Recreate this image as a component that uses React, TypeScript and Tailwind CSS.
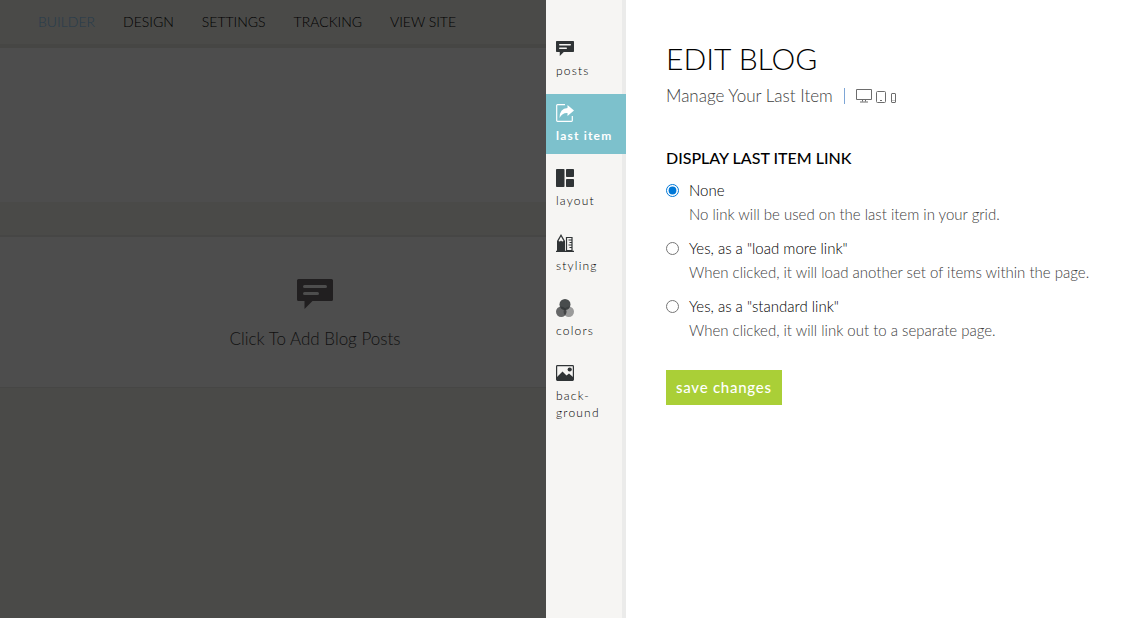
import type { ReactNode } from 'react';
import clsx from 'clsx';

const navLinks = ['Builder', 'Design', 'Settings', 'Tracking', 'View Site'];

const PostsIcon = ({ className, lines }: { className: string; lines: string }) => (
  <svg viewBox="0 0 36 30" className={className} aria-hidden="true">
    <path d="M1.500 0h33Q36 0 36 1.500v19Q36 22 34.500 22H15.500L7.500 30V22h-6Q0 22 0 20.500v-19Q0 0 1.500 0z" fill="currentColor" />
    <path d="M7.500 7.500h21M7.500 14.500h13" stroke={lines} strokeWidth="3" strokeLinecap="round" />
  </svg>
);

const ShareIcon = () => (
  <svg viewBox="0 0 18 18" className="size-[18px]" fill="none" aria-hidden="true">
    <path d="M9 .7H1.500Q.7.700.7 1.500V16.500Q.7 17.300 1.500 17.300H15.500Q16.300 17.300 16.300 16.500V12" stroke="currentColor" strokeWidth="1.200" />
    <path d="M11.500 1L18 6.500 11.500 12V9Q6.500 8.500 3.500 14 3.500 4.500 11.500 4z" fill="currentColor" />
  </svg>
);

const LayoutIcon = () => (
  <svg viewBox="0 0 18 18" className="size-[18px]" fill="currentColor" aria-hidden="true">
    <rect width="8.500" height="18" rx=".8" />
    <rect x="10" width="8" height="8" rx=".8" />
    <rect x="10" y="10" width="8" height="8" rx=".8" />
  </svg>
);

const StylingIcon = () => (
  <svg viewBox="0 0 18 18" className="size-[18px]" fill="none" aria-hidden="true">
    <path d="M1 17V7L5 0l4 7v10z" fill="currentColor" />
    <path d="M5 2.500L7.500 7Q6 8 5 6.500 4 8 2.500 7z" fill="#f6f5f3" />
    <path d="M10.500 3.500h5.500v13h-5.500z" stroke="currentColor" strokeWidth="1.200" />
    <path d="M12.500 6H16M13.500 8.500H16M12.500 11H16M13.500 13.500H16M0 17.300h18" stroke="currentColor" strokeWidth="1.200" />
  </svg>
);

const ColorsIcon = () => (
  <svg viewBox="0 0 18 18" className="size-[18px]" aria-hidden="true">
    <circle cx="12.800" cy="12.700" r="5.200" fill="#9b9b9b" />
    <circle cx="5.200" cy="12.700" r="5.200" fill="#666768" />
    <path d="M9 9.100a5.200 5.200 0 0 1 0 7.200 5.200 5.200 0 0 1 0-7.200z" fill="#444546" />
    <circle cx="9" cy="5.500" r="5.500" fill="#303436" fillOpacity=".88" />
  </svg>
);

const BackgroundIcon = () => (
  <svg viewBox="0 0 18 16" className="h-4 w-[18px]" aria-hidden="true">
    <rect x=".6" y=".6" width="16.800" height="14.800" rx=".8" fill="none" stroke="currentColor" strokeWidth="1.200" />
    <path d="M1 12l5.500-5.500 4 4 2.500-2 4 3.500v3.500H1z" fill="currentColor" />
    <circle cx="13.700" cy="4.500" r="2.100" fill="currentColor" />
  </svg>
);

const DevicesIcon = () => (
  <svg viewBox="0 0 42 16" className="h-4 w-[42px]" fill="none" stroke="#6d6d6d" aria-hidden="true">
    <path d="M.5 1.500h15v10H.5zM6.500 11.500v2M9.500 11.500v2M4 14h8" />
    <rect x="20.500" y="3.500" width="9" height="11" rx="1" />
    <path d="M24 12.500h2" />
    <rect x="35.500" y="5.500" width="4" height="9" rx=".5" />
    <path d="M36 12.500h3" strokeOpacity=".4" />
  </svg>
);

const tabs: { label: ReactNode; icon: ReactNode; active?: boolean }[] = [
  { label: 'posts', icon: <PostsIcon className="h-[15px] w-[18px]" lines="#f6f5f3" /> },
  { label: 'last item', icon: <ShareIcon />, active: true },
  { label: 'layout', icon: <LayoutIcon /> },
  { label: 'styling', icon: <StylingIcon /> },
  { label: 'colors', icon: <ColorsIcon /> },
  { label: <>back-<br />ground</>, icon: <BackgroundIcon /> },
];

const options = [
  { id: 'none', label: 'None', hint: 'No link will be used on the last item in your grid.' },
  { id: 'load-more', label: 'Yes, as a "load more link"', hint: 'When clicked, it will load another set of items within the page.' },
  { id: 'standard', label: 'Yes, as a "standard link"', hint: 'When clicked, it will link out to a separate page.' },
];

const App = () => {
  return (
    <div className="flex min-h-screen bg-white font-['Lato','Open_Sans',sans-serif] font-light">
      {/* Dimmed page behind the editor */}
      <div className="min-w-0 flex-1 overflow-hidden bg-[#4a4a48]">
        <nav className="flex h-12 items-center gap-7 border-b-4 border-[#464644] pl-[38px] text-sm whitespace-nowrap text-black uppercase">
          {navLinks.map((link, i) => (
            <a key={link} href="#" className={clsx(i === 0 && 'text-[#263b4c]')}>
              {link}
            </a>
          ))}
        </nav>
        <div className="h-[154px] bg-[#4d4d4d]" />
        <div className="h-[35px] border-b-2 border-[#464645]" />
        <button className="flex h-[151px] w-full flex-col items-center gap-5 border-b border-[#464645] bg-[#4d4d4d] pt-[42px] pl-[84px] text-[#211f20]">
          <PostsIcon className="h-[30px] w-9" lines="#4d4d4d" />
          <span className="text-[17px] leading-5 text-[#111]">Click To Add Blog Posts</span>
        </button>
      </div>

      {/* Tabs */}
      <aside className="w-20 shrink-0 border-r-4 border-[#ebebea] bg-[#f6f5f3] pt-[29px]">
        {tabs.map((tab, i) => (
          <button
            key={i}
            className={clsx(
              'mb-[5px] flex min-h-[60px] w-20 flex-col items-start px-[10px] pt-[10px] text-left text-xs/[17px] tracking-widest',
              tab.active ? 'bg-[#7dc1cc] font-bold text-white' : 'text-black',
            )}
          >
            <span className={clsx('flex h-[18px] items-center', !tab.active && 'text-[#303436]')}>{tab.icon}</span>
            <span className="mt-[5px] whitespace-nowrap">{tab.label}</span>
          </button>
        ))}
      </aside>

      {/* Settings panel */}
      <main className="w-[500px] shrink-0 px-10 pt-[38px] text-black">
        <h1 className="text-3xl leading-10">EDIT BLOG</h1>
        <div className="mt-[6px] flex items-center text-[17px] leading-6 text-[#404040]">
          <p>Manage Your Last Item</p>
          <span className="mr-[11px] ml-[11px] h-4 border-l border-[#7ea6d6]" />
          <DevicesIcon />
        </div>

        <form className="pt-10">
          <fieldset>
            <legend className="text-base leading-5 font-medium">DISPLAY LAST ITEM LINK</legend>
            {options.map((option) => (
              <div key={option.id} className="mt-[10px] flex items-start gap-[10px] text-[15px] leading-6">
                <input
                  type="radio"
                  id={option.id}
                  name="last-item"
                  defaultChecked={option.id === 'none'}
                  aria-describedby={`${option.id}-hint`}
                  className="mt-[6px] size-[13px] shrink-0 accent-[#0078d7]"
                />
                <div>
                  <label htmlFor={option.id}>{option.label}</label>
                  <p id={`${option.id}-hint`} className="whitespace-nowrap text-[#404040]">{option.hint}</p>
                </div>
              </div>
            ))}
          </fieldset>
          <button type="button" className="mt-7 h-[35px] bg-[#aacf37] px-[10px] text-[15px] font-medium tracking-wider text-white">
            save changes
          </button>
        </form>
      </main>
    </div>
  );
};

export default App;
